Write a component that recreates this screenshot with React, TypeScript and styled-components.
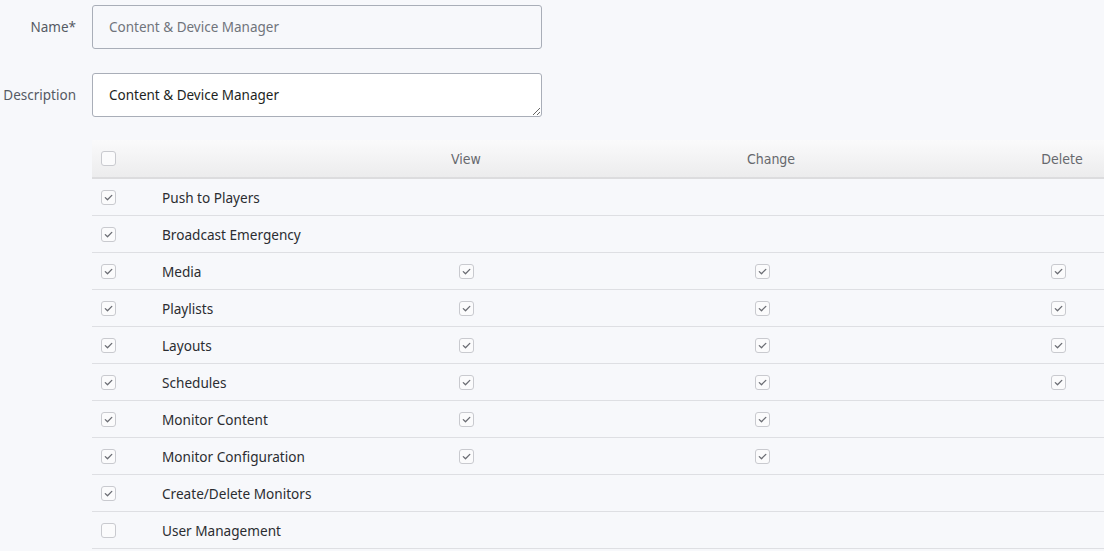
import React from "react";
import styled, { createGlobalStyle } from "styled-components";

const Global = createGlobalStyle`
  html, body { margin: 0; padding: 0; background: #f7f8fb; overflow: hidden; }
  body { font-family: "Noto Sans", "Open Sans", sans-serif; font-size: 13.5px; color: #2b2d31; }
  * { box-sizing: border-box; }
`;

const Page = styled.div`
  width: 1104px;
  height: 551px;
  padding-top: 5px;
  overflow: hidden;
`;

const FormRow = styled.div<{ $mb: number }>`
  display: grid;
  grid-template-columns: 76px 450px;
  column-gap: 16px;
  align-items: center;
  margin-bottom: ${(p) => p.$mb}px;
`;

const Label = styled.label`
  text-align: right;
  color: #555a63;
  font-size: 13.5px;
`;

const Input = styled.input`
  height: 44px;
  width: 450px;
  border: 1px solid #a9aeb8;
  border-radius: 3px;
  background: #f7f8fb;
  padding: 0 16px;
  font-family: inherit;
  font-size: 13.5px;
  color: #70747c;
  outline: none;
  display: block;
`;

const TextArea = styled.textarea`
  height: 44px;
  width: 450px;
  border: 1px solid #a9aeb8;
  border-radius: 3px;
  background: #ffffff;
  padding: 12px 16px;
  font-family: inherit;
  font-size: 13.5px;
  line-height: 18px;
  color: #1d1f23;
  outline: none;
  resize: vertical;
  display: block;
`;

const Table = styled.div`
  margin-left: 92px;
  width: 1114px;
`;

const GRID = "70px 156px 296px 296px 296px";

const HeaderRow = styled.div`
  display: grid;
  grid-template-columns: ${GRID};
  height: 39px;
  align-items: center;
  background: linear-gradient(#fafafb, #ececed);
  border-bottom: 2px solid #dcdcde;
`;

const HeadCell = styled.div<{ $shift?: number }>`
  text-align: center;
  font-family: "DejaVu Sans Condensed", "Liberation Sans Narrow", "Noto Sans", sans-serif;
  font-stretch: condensed;
  font-size: 14px;
  color: #66686d;
  padding-left: ${(p) => (p.$shift ?? 0) * 2}px;
`;

const Row = styled.div`
  display: grid;
  grid-template-columns: ${GRID};
  height: 37px;
  align-items: center;
  border-bottom: 1px solid #dedfe3;
`;

const CheckCell = styled.div`
  padding-left: 9px;
  display: flex;
  align-items: center;
`;

const CenterCell = styled.div`
  display: flex;
  justify-content: center;
`;

const NameCell = styled.div`
  color: #2b2d31;
  font-size: 13.6px;
  white-space: nowrap;
`;

const Box = styled.span`
  width: 15px;
  height: 15px;
  border: 1px solid #c9cacf;
  border-radius: 3px;
  background: #fbfbfc;
  display: inline-flex;
  align-items: center;
  justify-content: center;
`;

const Check: React.FC<{ on: boolean }> = ({ on }) => (
  <Box>
    {on && (
      <svg width="11" height="11" viewBox="0 0 11 11">
        <path d="M2.3 5.6 L4.5 7.7 L8.8 3.4" fill="none" stroke="#6a6c73" strokeWidth="1.3" strokeLinecap="round" strokeLinejoin="round" />
      </svg>
    )}
  </Box>
);

type Perm = { name: string; all: boolean; v?: boolean; c?: boolean; d?: boolean };

const perms: Perm[] = [
  { name: "Push to Players", all: true },
  { name: "Broadcast Emergency", all: true },
  { name: "Media", all: true, v: true, c: true, d: true },
  { name: "Playlists", all: true, v: true, c: true, d: true },
  { name: "Layouts", all: true, v: true, c: true, d: true },
  { name: "Schedules", all: true, v: true, c: true, d: true },
  { name: "Monitor Content", all: true, v: true, c: true },
  { name: "Monitor Configuration", all: true, v: true, c: true },
  { name: "Create/Delete Monitors", all: true },
  { name: "User Management", all: false },
];

export default function App() {
  return (
    <Page>
      <Global />
      <FormRow $mb={24}>
        <Label>Name*</Label>
        <Input readOnly value="Content & Device Manager" />
      </FormRow>
      <FormRow $mb={23}>
        <Label>Description</Label>
        <TextArea readOnly value="Content & Device Manager" />
      </FormRow>
      <Table>
        <HeaderRow>
          <CheckCell>
            <Check on={false} />
          </CheckCell>
          <div />
          <HeadCell $shift={-1}>View</HeadCell>
          <HeadCell $shift={9}>Change</HeadCell>
          <HeadCell $shift={4}>Delete</HeadCell>
        </HeaderRow>
        {perms.map((p) => (
          <Row key={p.name}>
            <CheckCell>
              <Check on={p.all} />
            </CheckCell>
            <NameCell>{p.name}</NameCell>
            <CenterCell>{p.v && <Check on />}</CenterCell>
            <CenterCell>{p.c && <Check on />}</CenterCell>
            <CenterCell>{p.d && <Check on />}</CenterCell>
          </Row>
        ))}
      </Table>
    </Page>
  );
}
